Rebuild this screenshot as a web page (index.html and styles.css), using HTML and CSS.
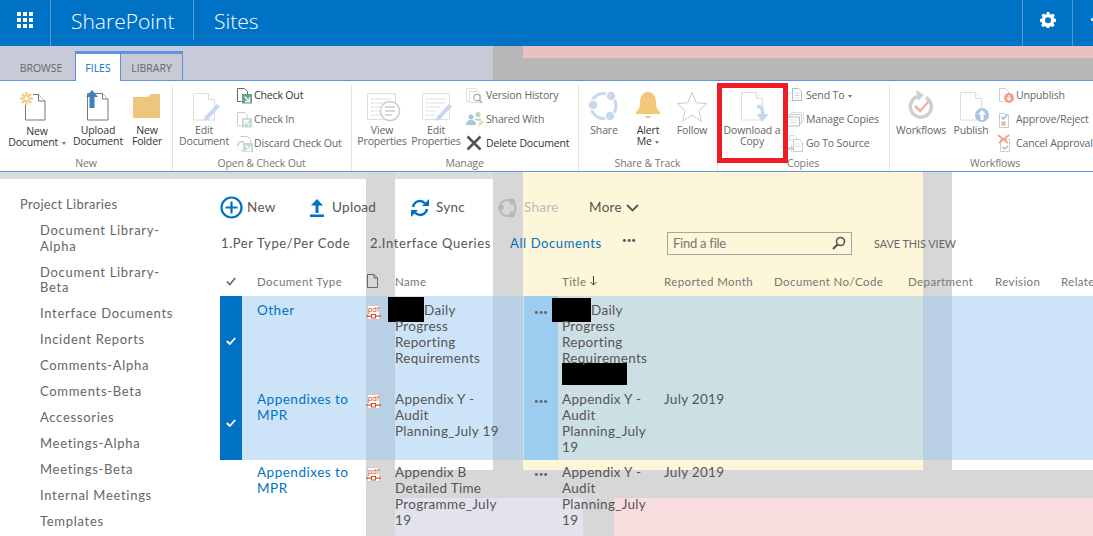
FILE: index.html
```html
<!DOCTYPE html>
<html lang="en">
<head>
<meta charset="utf-8">
<title>SharePoint Sites</title>
<link rel="stylesheet" href="styles.css">
</head>
<body>
<div class="page">
  <svg class="watermark" width="1093" height="536" aria-hidden="true">
    <rect x="0" y="46" width="493" height="34" fill="#c8cad8"/>
    <rect x="493" y="46" width="600" height="34" fill="#b7b7b7"/>
    <rect x="523" y="46" width="570" height="12" fill="#e8c2c2"/>
    <rect x="0" y="172" width="523" height="7" fill="#dcdcdc"/>
    <rect x="366" y="172" width="29" height="364" fill="#d7d7d7"/>
    <rect x="493" y="172" width="30" height="364" fill="#d7d7d7"/>
    <rect x="523" y="172" width="400" height="298" fill="#fdf6d8"/>
    <rect x="923" y="172" width="29" height="364" fill="#d7d7d7"/>
    <rect x="366" y="470" width="727" height="66" fill="#d7d7d7"/>
    <rect x="395" y="498" width="188" height="38" fill="#e3e3ee"/>
    <rect x="614" y="498" width="479" height="38" fill="#f9dedf"/>
  </svg>

  <header class="topbar">
    <div class="waffle-cell">
      <svg width="16" height="16" viewBox="0 0 16 16"><path fill="#fff" d="M0 0h4v4H0zM6 0h4v4H6zM12 0h4v4h-4zM0 6h4v4H0zM6 6h4v4H6zM12 6h4v4h-4zM0 12h4v4H0zM6 12h4v4H6zM12 12h4v4h-4z"/></svg>
    </div>
    <div class="brand">SharePoint</div>
    <div class="sites">Sites</div>
    <div class="top-spacer"></div>
    <div class="gear-cell">
      <svg width="16" height="16" viewBox="0 0 16 16"><path fill="#fff" fill-rule="evenodd" d="M6.600 0h2.800l.4 2.100 1.300.6L12.900 1.500 14.900 3.500l-1.200 1.800.6 1.300 1.700.4v2.800l-2.100.4-.5 1.300 1.200 1.800-2 2-1.800-1.200-1.300.6-.4 2.100H6.600l-.4-2.100-1.300-.6-1.800 1.200-2-2 1.200-1.800-.6-1.300L0 9.800V7l2.100-.4.600-1.300-1.200-1.800 2-2 1.800 1.200 1.300-.6zM8 5.300a3 3 0 1 0 0 6 3 3 0 0 0 0-6z"/></svg>
    </div>
    <div class="top-end"><i class="user-edge"></i></div>
  </header>

  <nav class="tabs">
    <div class="tab">BROWSE</div>
    <div class="tab tab-active">FILES</div>
    <div class="tab tab-lib">LIBRARY</div>
  </nav>

  <section class="ribbon">
    <div class="group g1">
      <div class="group-body">
        <div class="big w58 dark">
          <svg class="ic" width="40" height="38" viewBox="0 0 40 38"><path class="pg" d="M8.500 8.500h13l6.500 6.500v19H8.500z"/><path class="pg" d="M21.500 8.500v6.500H28"/><rect x="3" y="6" width="13" height="13" fill="#fff"/><path stroke="#f6c777" stroke-width="2.200" fill="none" d="M9.500 6v13M3 12.500h13M5 8l9 9M14 8l-9 9"/><circle cx="9.500" cy="12.500" r="2" fill="#fff"/></svg>
          <div class="lbl lbl-low">New<br>Document <i class="caret"></i></div>
        </div>
        <div class="big w64 dark">
          <svg class="ic" width="40" height="38" viewBox="0 0 40 38"><path class="pg" d="M9.500 7.500h15l5.500 5.500v21H9.500z"/><path class="pg" d="M24.500 7.500V13H30"/><path fill="#3f7fbf" d="M14 4l6 7h-3.500v11h-5V11H8z"/></svg>
          <div class="lbl">Upload<br>Document</div>
        </div>
        <div class="big w34 dark">
          <svg class="ic" width="40" height="38" viewBox="0 0 40 38"><path fill="#eec67b" d="M6 11h15l3-3h8l1 1v23H6z"/></svg>
          <div class="lbl">New<br>Folder</div>
        </div>
      </div>
      <div class="group-label">New</div>
    </div>

    <div class="group g2">
      <div class="group-body">
        <div class="big w50">
          <svg class="ic" width="40" height="38" viewBox="0 0 40 38"><path class="pg-l" d="M9.500 7.500h15l6 6v20.500h-21z"/><path class="pg-l" d="M24.500 7.500v6h6"/><path fill="#c6d8ee" d="M33 18l3 2.500-12 13-4.500 1.500 1.500-4.500z"/></svg>
          <div class="lbl">Edit<br>Document</div>
        </div>
        <div class="col">
          <div class="row"><svg width="17" height="17" viewBox="0 0 17 17"><path fill="none" stroke="#666" d="M.500 1.500h7l3 3v4M.500 1.500v13h4"/><rect x="5" y="7" width="10" height="9.500" fill="#69a286"/><path stroke="#fff" stroke-width="1.300" fill="none" d="M7.500 9.500l4.500 4.500M12.500 10v4.500H8"/></svg><span class="dark">Check Out</span></div>
          <div class="row"><svg width="17" height="17" viewBox="0 0 17 17"><path fill="none" stroke="#ccc" d="M.500 1.500h7l3 3v4M.500 1.500v13h4"/><rect x="5" y="7" width="10" height="9.500" fill="#c7dcd1"/><path stroke="#fff" stroke-width="1.300" fill="none" d="M12.500 14L8 9.500M7.500 14V9.500H12"/></svg><span>Check In</span></div>
          <div class="row"><svg width="17" height="17" viewBox="0 0 17 17"><path fill="none" stroke="#ccc" d="M3.500 1.500h7l3 3v4M3.500 16h3"/><rect x="6" y="8" width="10" height="9" fill="#c7dcd1"/><path stroke="#fff" stroke-width="1.300" fill="none" d="M8.500 10.500l4.500 4.500M13.500 11v4.500H9"/><path fill="none" stroke="#c6d8ee" stroke-width="2" d="M1 11c0-3 2-5 6-4"/></svg><span>Discard Check Out</span></div>
        </div>
      </div>
      <div class="group-label">Open &amp; Check Out</div>
    </div>

    <div class="group g3">
      <div class="group-body">
        <div class="big w52">
          <svg class="ic" width="40" height="38" viewBox="0 0 40 38"><path class="pg-l" d="M5.500 7.500h28v26h-28z"/><path stroke="#c6d8ee" d="M9 13h3M9 17h3M9 21h3M9 25h3M9 29h3"/><path stroke="#ddd" d="M13 13h16M13 17h16M13 21h8M13 25h6M13 29h6"/><circle cx="28" cy="25" r="9.500" fill="#fff" stroke="#ccc" stroke-width="1.500"/><path stroke="#ccc" stroke-width="1.500" d="M23 21h10M23 25h10M23 29h7"/></svg>
          <div class="lbl">View<br>Properties</div>
        </div>
        <div class="big w52">
          <svg class="ic" width="40" height="38" viewBox="0 0 40 38"><path class="pg-l" d="M6.500 7.500h27v26h-27z"/><path stroke="#c6d8ee" d="M10 13h3M10 17h3M10 21h3M10 25h3M10 29h3"/><path stroke="#ddd" d="M14 13h15M14 17h15M14 21h10M14 25h6M14 29h4"/><path fill="#c6d8ee" d="M33 18l3 2.500-12 13-4.500 2 1.500-5z"/></svg>
          <div class="lbl">Edit<br>Properties</div>
        </div>
        <div class="col col-in">
          <div class="row"><svg width="20" height="17" viewBox="0 0 20 17"><path fill="#fff" stroke="#f2e2c7" d="M.500 1.500h10v3h-7v10h-3z"/><path fill="#fff" stroke="#ddd" d="M3.500 4.500h8l3 3v8h-11z"/><circle cx="11" cy="10.500" r="3.200" fill="#fff" stroke="#aaa" stroke-width="1.200"/><path stroke="#aaa" stroke-width="1.500" d="M13 13l3 3"/></svg><span>Version History</span></div>
          <div class="row"><svg width="20" height="17" viewBox="0 0 20 17"><circle cx="5" cy="6" r="2.500" fill="#aac4e4"/><path fill="#aac4e4" d="M0 14c0-3 2-5 5-5s5 2 5 5z"/><circle cx="12" cy="3.500" r="2.500" fill="#b7d5c3"/><path fill="#b7d5c3" d="M8 9c1-2 6-2 8 0l-3 1z"/><path fill="#f2d9a8" d="M12 16l1-4 3-3 2 2-3 3z"/></svg><span>Shared With</span></div>
          <div class="row"><svg width="20" height="17" viewBox="0 0 20 17"><path stroke="#555" stroke-width="2.600" fill="none" d="M1.500 1.500l13 13M14.500 1.500l-13 13"/></svg><span class="dark">Delete Document</span></div>
        </div>
      </div>
      <div class="group-label">Manage</div>
    </div>

    <div class="group g4">
      <div class="group-body">
        <div class="big w30">
          <svg class="ic" width="40" height="38" viewBox="0 0 40 38"><circle cx="19.500" cy="20" r="12.500" fill="none" stroke="#c6d8ea" stroke-width="3"/><g fill="#c6d8ea" stroke="#fff" stroke-width="1.500"><circle cx="27" cy="10" r="5"/><circle cx="9" cy="19" r="5"/><circle cx="26" cy="30" r="5"/></g></svg>
          <div class="lbl">Share</div>
        </div>
        <div class="big w30">
          <svg class="ic" width="40" height="38" viewBox="0 0 40 38"><path fill="#f0c77b" d="M20 6c-6 0-8 5-8 11 0 5-2 7-4 9v2h24v-2c-2-2-4-4-4-9 0-6-2-11-8-11z"/><path fill="#f0c77b" d="M16 30h8l-4 2.500z"/></svg>
          <div class="lbl dark">Alert<br>Me <i class="caret"></i></div>
        </div>
        <div class="big w30">
          <svg class="ic" width="40" height="38" viewBox="0 0 40 38"><path fill="none" stroke="#ccc" d="M20 6.500l4.300 10.300 10.700.8-8.100 7 2.500 10.700L20 29l-9.400 6.300 2.500-10.700-8.100-7 10.700-.8z"/></svg>
          <div class="lbl">Follow</div>
        </div>
      </div>
      <div class="group-label">Share &amp; Track</div>
    </div>

    <div class="group g5">
      <div class="group-body">
        <div class="big w56">
          <svg class="ic" width="40" height="38" viewBox="0 0 40 38"><path class="pg-l" d="M9.500 6.500h15l6 6v21.500h-21z"/><path class="pg-l" d="M24.500 6.500v6h6"/><path fill="none" stroke="#c6d8ee" stroke-width="3.500" d="M25 20.500c4 0 5.500 2 5.500 5v5"/><path fill="#c6d8ee" d="M24.500 28h12l-6 8z"/></svg>
          <div class="lbl">Download a<br>Copy</div>
        </div>
        <div class="col">
          <div class="row"><svg width="19" height="17" viewBox="0 0 19 17"><path fill="#fff" stroke="#ddd" d="M1 6h6v8H1z"/><path fill="#fff" stroke="#bbb" d="M5.500 1.500h6l3 3v9h-9z"/><path stroke="#c6d8ee" d="M7.500 6h5M7.500 8.500h5M7.500 11h5"/></svg><span>Send To <i class="caret"></i></span></div>
          <div class="row"><svg width="19" height="17" viewBox="0 0 19 17"><path fill="#fff" stroke="#ddd" d="M4.500 1.500h12v9h-12z"/><path fill="#fff" stroke="#ccc" d="M2.500 3.500h12v9h-12z"/><path fill="#fff" stroke="#bbb" d="M.500 6h12v9H.500z"/><path stroke="#ddd" d="M3 9h7M3 11.500h7"/></svg><span>Manage Copies</span></div>
          <div class="row"><svg width="19" height="17" viewBox="0 0 19 17"><path fill="#fff" stroke="#ddd" d="M2.500.500h5l2 2v3h-7z"/><path fill="#fff" stroke="#ccc" d="M6.500 4.500h6l3 3v9h-9z"/><path stroke="#ddd" d="M8.500 9h5M8.500 11.500h5"/><path fill="#c6d8ee" d="M0 12h4v-2l4 3.500-4 3.500v-2H0z"/></svg><span>Go To Source</span></div>
        </div>
      </div>
      <div class="group-label">Copies</div>
    </div>

    <div class="group g6">
      <div class="group-body">
        <div class="big w50">
          <svg class="ic" width="40" height="38" viewBox="0 0 40 38"><path fill="none" stroke="#cfcfcf" stroke-width="3.500" d="M17 10.500a10.500 10.500 0 1 0 8 1"/><path fill="#cfcfcf" d="M15 4l8 5-6 6z"/><path fill="none" stroke="#f2b0a2" stroke-width="2.500" d="M14 20l5 5 9-10"/></svg>
          <div class="lbl">Workflows</div>
        </div>
        <div class="big w34">
          <svg class="ic" width="40" height="38" viewBox="0 0 40 38"><path class="pg-l" d="M9.500 6.500h15l6 6v21.500h-21z"/><path class="pg-l" d="M24.500 6.500v6h6"/><circle cx="31" cy="29" r="7" fill="#a9c6e6"/><path fill="#fff" d="M31 24l4 4.500h-2.500V34h-3v-5.500H27z"/></svg>
          <div class="lbl">Publish</div>
        </div>
        <div class="col col-in">
          <div class="row"><svg width="18" height="17" viewBox="0 0 18 17"><path fill="none" stroke="#ccc" d="M1.500 1.500h6l3 3v4M1.500 1.500v13h4"/><circle cx="11" cy="11" r="5" fill="#f0a184"/><path stroke="#fff" stroke-width="1.300" d="M11 8v4M9 10.500l2 2.500 2-2.500"/></svg><span>Unpublish</span></div>
          <div class="row"><svg width="18" height="17" viewBox="0 0 18 17"><path fill="#fff" stroke="#ccc" d="M1.500 2.500h5l1 1h3v13h-9z"/><path fill="none" stroke="#8ab3dc" stroke-width="1.200" d="M3.500 6l2 2 3.500-4"/><path fill="none" stroke="#e99b85" stroke-width="1.200" d="M3.500 10.500l4 4M7.500 10.500l-4 4"/></svg><span>Approve/Reject</span></div>
          <div class="row"><svg width="18" height="17" viewBox="0 0 18 17"><path fill="#fff" stroke="#ccc" d="M2.500 4.500h9v12h-9z"/><path fill="none" stroke="#f0a184" stroke-width="1.800" d="M0 0l10 8M11 0L1 8"/><path fill="none" stroke="#8ab3dc" stroke-width="1.200" d="M4.500 12l2 2 3.500-3"/></svg><span>Cancel Approval</span></div>
        </div>
      </div>
      <div class="group-label">Workflows</div>
    </div>
    <div class="redbox"></div>
  </section>

  <div class="content">
    <aside class="sidenav">
      <div class="nav-head">Project Libraries</div>
      <div class="nav-item">Document Library-<br>Alpha</div>
      <div class="nav-item">Document Library-<br>Beta</div>
      <div class="nav-item">Interface Documents</div>
      <div class="nav-item">Incident Reports</div>
      <div class="nav-item">Comments-Alpha</div>
      <div class="nav-item">Comments-Beta</div>
      <div class="nav-item">Accessories</div>
      <div class="nav-item">Meetings-Alpha</div>
      <div class="nav-item">Meetings-Beta</div>
      <div class="nav-item">Internal Meetings</div>
      <div class="nav-item">Templates</div>
    </aside>

    <main class="library">
      <div class="cmdbar">
        <div class="cmd"><svg width="23" height="23" viewBox="0 0 23 23"><circle cx="11.500" cy="11.500" r="10" fill="none" stroke="#0072c6" stroke-width="2.200"/><path stroke="#0072c6" stroke-width="2.200" d="M11.500 5.500v12M5.500 11.500h12"/></svg><span>New</span></div>
        <div class="cmd cmd-upload"><svg width="14" height="18" viewBox="0 0 14 18"><path fill="#0072c6" d="M7 0l6 6.500H8.500V14h-3V6.500H1zM0 15.500h14V18H0z"/></svg><span>Upload</span></div>
        <div class="cmd cmd-sync"><svg width="18" height="18" viewBox="0 0 18 18"><path fill="none" stroke="#0072c6" stroke-width="2.600" d="M2 8c.6-3.500 3.500-6 7-6 2.200 0 3.800 1 5 2.500M16 10c-.6 3.500-3.500 6-7 6-2.200 0-3.800-1-5-2.500"/><path fill="#0072c6" d="M18 0v7h-7zM0 18v-7h7z"/></svg><span>Sync</span></div>
        <div class="cmd cmd-share"><svg width="19" height="20" viewBox="0 0 19 20"><circle cx="9.500" cy="10" r="8" fill="none" stroke="#b8b8b8" stroke-width="2.200"/><g fill="#b8b8b8"><circle cx="14" cy="3.500" r="3"/><circle cx="2.800" cy="9.500" r="3"/><circle cx="14" cy="16.500" r="3"/></g></svg><span class="muted">Share</span></div>
        <div class="cmd cmd-more"><span>More</span><svg width="13" height="8" viewBox="0 0 13 8"><path fill="none" stroke="#555" stroke-width="1.800" d="M1 1l5.500 5.500L12 1"/></svg></div>
      </div>

      <div class="viewbar">
        <div class="view">1.Per Type/Per Code</div>
        <div class="view">2.Interface Queries</div>
        <div class="view view-active">All Documents</div>
        <div class="view-dots">•••</div>
        <div class="search"><span>Find a file</span><svg width="14" height="14" viewBox="0 0 14 14"><circle cx="8.500" cy="5.500" r="4" fill="none" stroke="#555" stroke-width="1.600"/><path stroke="#555" stroke-width="2.200" d="M5.500 8.500L1 13"/></svg></div>
        <div class="saveview">SAVE THIS VIEW</div>
      </div>

      <div class="grid-head">
        <div class="hc hc-check"><svg width="10" height="9" viewBox="0 0 10 9"><path fill="none" stroke="#666" stroke-width="1.600" d="M.8 4.500L3.800 7.500 9.200 1"/></svg></div>
        <div class="hc">Document Type</div>
        <div class="hc hc-doc"><svg width="11" height="14" viewBox="0 0 11 14"><path fill="none" stroke="#666" d="M.500.500h6.500l3.500 3.500v9.500H.500zM7 .500V4h3.500"/></svg></div>
        <div class="hc">Name</div>
        <div class="hc"></div>
        <div class="hc hc-title">Title <svg width="7" height="10" viewBox="0 0 7 10"><path fill="none" stroke="#444" d="M3.500 0v9M.5 6l3 3 3-3"/></svg></div>
        <div class="hc">Reported Month</div>
        <div class="hc">Document No/Code</div>
        <div class="hc">Department</div>
        <div class="hc">Revision</div>
        <div class="hc">Related</div>
      </div>

      <div class="item selected item1">
        <div class="c-check"><svg width="10" height="8" viewBox="0 0 10 8"><path fill="none" stroke="#fff" stroke-width="1.800" d="M.8 4L3.800 7 9.200 1"/></svg></div>
        <div class="c-type"><a>Other</a></div>
        <div class="c-icon"><svg class="pdf" width="15" height="17" viewBox="0 0 15 17"><path fill="#fff" stroke="#ccc" d="M1.500.500h12v14h-12z"/><text x="7.500" y="7" class="pdf-t">pdf</text><path fill="#d44a2c" d="M0 10.500h15v1.200H0z"/><rect x="5.500" y="9.500" width="4" height="3.500" fill="#fff" stroke="#d44a2c"/></svg></div>
        <div class="c-name"><i class="redact redact-name"></i>Daily<br>Progress<br>Reporting<br>Requirements</div>
        <div class="c-dots">•••</div>
        <div class="c-title"><i class="redact redact-title"></i>Daily<br>Progress<br>Reporting<br>Requirements<i class="redact redact-block"></i></div>
        <div class="c-month"></div>
      </div>

      <div class="item selected item2">
        <div class="c-check"><svg width="10" height="8" viewBox="0 0 10 8"><path fill="none" stroke="#fff" stroke-width="1.800" d="M.8 4L3.800 7 9.200 1"/></svg></div>
        <div class="c-type"><a>Appendixes to<br>MPR</a></div>
        <div class="c-icon"><svg class="pdf" width="15" height="17" viewBox="0 0 15 17"><path fill="#fff" stroke="#ccc" d="M1.500.500h12v14h-12z"/><text x="7.500" y="7" class="pdf-t">pdf</text><path fill="#d44a2c" d="M0 10.500h15v1.200H0z"/><rect x="5.500" y="9.500" width="4" height="3.500" fill="#fff" stroke="#d44a2c"/></svg></div>
        <div class="c-name">Appendix Y -<br>Audit<br>Planning_July 19</div>
        <div class="c-dots">•••</div>
        <div class="c-title">Appendix Y -<br>Audit<br>Planning_July<br>19</div>
        <div class="c-month">July 2019</div>
      </div>

      <div class="item item3">
        <div class="c-check"></div>
        <div class="c-type"><a>Appendixes to<br>MPR</a></div>
        <div class="c-icon"><svg class="pdf" width="15" height="17" viewBox="0 0 15 17"><path fill="#fff" stroke="#ccc" d="M1.500.500h12v14h-12z"/><text x="7.500" y="7" class="pdf-t">pdf</text><path fill="#d44a2c" d="M0 10.500h15v1.200H0z"/><rect x="5.500" y="9.500" width="4" height="3.500" fill="#fff" stroke="#d44a2c"/></svg></div>
        <div class="c-name">Appendix B<br>Detailed Time<br>Programme_July<br>19</div>
        <div class="c-dots">•••</div>
        <div class="c-title">Appendix Y -<br>Audit<br>Planning_July<br>19</div>
        <div class="c-month">July 2019</div>
      </div>
    </main>
  </div>
</div>
</body>
</html>
```

FILE: styles.css
```css
* { box-sizing: border-box; }
html, body { margin: 0; padding: 0; background: #fff; }
.page { position: relative; width: 1093px; height: 536px; overflow: hidden; font-family: "Open Sans", "Liberation Sans", sans-serif; color: #555; }
.watermark { position: absolute; left: 0; top: 0; z-index: 0; }
.topbar, .tabs, .ribbon, .content { position: relative; z-index: 1; }

/* top bar */
.topbar { display: flex; height: 46px; background: #0072c6; color: #fff; font-weight: 300; font-size: 21px; line-height: 43px; }
.waffle-cell { width: 51px; border-right: 1px solid #4f9bd6; padding: 12px 0 0 17px; line-height: 0; }
.brand { width: 143px; padding-left: 20px; height: 40px; border-right: 1px solid #4f9bd6; }
.sites { padding-left: 20px; }
.top-spacer { flex: 1; }
.gear-cell { width: 51px; border-left: 1px solid #4f9bd6; border-right: 1px solid #4f9bd6; padding: 12px 0 0 17px; line-height: 0; }
.top-end { width: 20px; display: flex; justify-content: flex-end; align-items: flex-start; }
.user-edge { width: 2px; height: 3px; margin-top: 18px; background: #cfe3f3; }

/* tabs */
.tabs { display: flex; height: 35px; padding: 5px 0 0 7px; border-bottom: 1px solid #5b95e0; font-size: 10.500px; color: #666; }
.tab { width: 68px; padding-top: 8px; text-align: center; line-height: 18px; }
.tab-active, .tab-lib { border-top: 3px solid #5b95e0; border-right: 1px solid #5b95e0; padding-top: 5px; }
.tab-active { width: 46px; height: 30px; background: #fff; border-left: 1px solid #5b95e0; color: #0072c6; }
.tab-lib { width: 62px; }

/* ribbon */
.ribbon { display: flex; height: 91px; background: #fff; border-bottom: 1px solid #5b95e0; font-size: 10.500px; line-height: 11px; color: #666; letter-spacing: -0.15px; }
.group { display: flex; flex-direction: column; flex: none; position: relative; }
.group + .group::before { content: ""; position: absolute; left: 0; top: 4px; bottom: 0; width: 1px; background: #e4e4e4; }
.g1 { width: 172px; }
.g2 { width: 179px; }
.g3 { width: 227px; }
.g4 { width: 139px; }
.g5 { width: 172px; }
.g6 { width: 212px; }
.group-body { display: flex; height: 74px; }
.g1 .group-body { padding-left: 8px; }
.g2 .group-body { padding-left: 7px; gap: 8px; }
.g3 .group-body { padding-left: 5px; gap: 2px; }
.g4 .group-body { padding-left: 11px; gap: 14px; }
.g5 .group-body { padding-left: 7px; gap: 7px; }
.g6 .group-body { padding-left: 7px; gap: 8px; }
.col-in { margin-left: 2px; }
.group-label { height: 16px; line-height: 16px; text-align: center; color: #777; }
.big { display: flex; flex-direction: column; align-items: center; padding-top: 5px; text-align: center; white-space: nowrap; flex: none; }
.ic { flex: none; overflow: visible; }
.w58 { width: 58px; } .w64 { width: 64px; } .w34 { width: 34px; } .w50 { width: 50px; }
.w52 { width: 52px; } .w30 { width: 30px; } .w56 { width: 56px; }
.lbl { margin-top: 1px; }
.lbl-low { margin-top: 2px; }
.col { display: flex; flex-direction: column; padding-top: 2px; }
.row { display: flex; align-items: center; height: 24px; white-space: nowrap; }
.row svg { flex: none; overflow: visible; }
.dark { color: #333; }
.pg { fill: #fff; stroke: #777; }
.pg-l { fill: #fff; stroke: #ddd; }
.caret { display: inline-block; width: 0; height: 0; margin-left: 1px; vertical-align: 1px; border: 2.500px solid transparent; border-top: 3px solid #777; border-bottom: 0; }
.redbox { position: absolute; left: 717px; top: 2px; width: 71px; height: 80px; border: 5px solid #ee1c25; }

/* content */
.content { display: flex; height: 364px; }
.sidenav { width: 220px; flex: none; padding: 24px 0 0 20px; font-family: Lato, "Open Sans", sans-serif; font-size: 13px; color: #666; }
.nav-head { line-height: 16px; margin-bottom: 11px; letter-spacing: 0.3px; }
.nav-item { padding-left: 20px; line-height: 15.500px; margin-bottom: 10.500px; letter-spacing: 0.7px; }

.library { flex: none; width: 873px; font-family: Lato, "Open Sans", sans-serif; font-size: 13px; color: #555; }
.cmdbar { display: flex; height: 23px; margin-top: 24px; font-size: 13.500px; letter-spacing: 0.3px; }
.cmd { display: flex; align-items: center; width: 90px; gap: 4px; line-height: 23px; }
.cmd-upload { width: 101px; gap: 8px; }
.cmd-sync { width: 87px; gap: 7px; }
.cmd-share { width: 91px; gap: 7px; }
.cmd-more { gap: 4px; }
.muted { color: #bbb; }

.viewbar { display: flex; align-items: center; height: 22px; margin-top: 13px; margin-left: 1px; letter-spacing: 0.6px; }
.view { width: 149px; white-space: nowrap; }
.view + .view { width: 140px; }
.view + .view + .view { width: 112px; }
.view-active { color: #0072c6; }
.view-dots { width: 45px; font-size: 8px; letter-spacing: 0; margin-top: -6px; }
.search { display: flex; align-items: center; justify-content: space-between; width: 185px; height: 23px; border: 1px solid #a6a6a6; padding: 0 5px 0 5px; color: #777; letter-spacing: -0.25px; }
.saveview { margin-left: 22px; font-size: 10.800px; letter-spacing: 0; white-space: nowrap; color: #666; }

.grid-head, .item { display: grid; grid-template-columns: 22px 124px 29px 129px 34px 106px 110px 134px 87px 66px 60px; }
.grid-head { height: 30px; margin-top: 12px; align-items: center; font-size: 11.500px; color: #777; letter-spacing: 0.4px; white-space: nowrap; }
.hc { padding-left: 15px; }
.hc-check { padding: 0 0 0 6px; line-height: 0; }
.hc-doc { padding: 0 0 0 1px; line-height: 0; }
.hc:nth-child(n+4) { padding-left: 0; }
.hc-title.hc-title { padding-left: 4px; }

.item { font-size: 13.500px; line-height: 16px; color: #555; position: relative; letter-spacing: 0.3px; }
.item1 { height: 89px; }
.item2 { height: 75px; }
.item3 { height: 76px; margin-top: -2px; }
.selected { background: rgba(153, 200, 241, 0.49); }
.c-check { display: flex; align-items: center; justify-content: center; }
.selected .c-check { background: #0072c6; }
.c-type { padding: 6px 0 0 15px; letter-spacing: 0.5px; }
.item a { color: #0072c6; }
.c-icon { padding-top: 9px; line-height: 0; }
.pdf { overflow: visible; }
.pdf-t { font-family: "Open Sans", sans-serif; font-size: 7.500px; font-weight: 400; fill: #d44a2c; text-anchor: middle; letter-spacing: 0; }
.c-name { padding-top: 6px; white-space: nowrap; }
.c-dots { padding: 8px 0 0 10px; font-size: 8px; color: #666; letter-spacing: 0; line-height: 16px; }
.selected .c-dots { background: #9ccdf0; }
.c-title { padding: 6px 0 0 4px; white-space: nowrap; }
.c-month { padding-top: 6px; white-space: nowrap; }
.redact { display: inline-block; background: #000; vertical-align: top; }
.redact-name { width: 36px; height: 25px; margin: -5px 0 -4px -7px; }
.redact-title { width: 39px; height: 24px; margin: -4px 0 -4px -10px; }
.redact-block { display: block; width: 65px; height: 22px; margin-top: -3px; }
```
